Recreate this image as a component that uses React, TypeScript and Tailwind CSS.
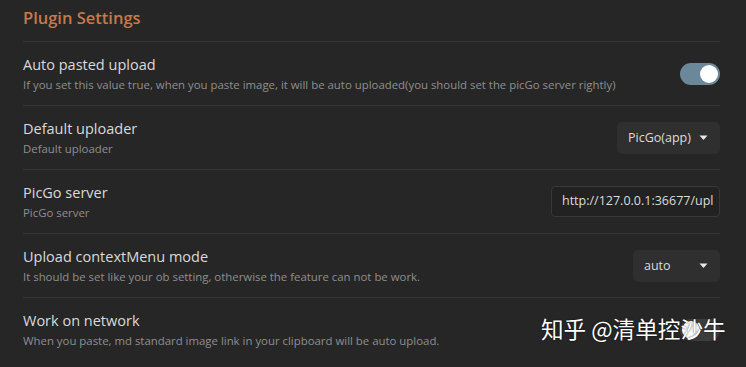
import React from "react";

const font = { fontFamily: '"Open Sans", "Noto Sans", sans-serif' };

function Row({ title, desc, children }: { title: string; desc: string; children: React.ReactNode }) {
  return (
    <div className="flex h-[64px] items-center justify-between border-t border-[#363636]">
      <div className="flex flex-col">
        <div className="text-[14.5px] leading-[19px] text-[#dadada]">{title}</div>
        <div className="mt-[3px] text-[11.4px] leading-[16px] text-[#8f8f8f]">{desc}</div>
      </div>
      <div className="flex items-center">{children}</div>
    </div>
  );
}

function Caret() {
  return (
    <svg width="9" height="6" viewBox="0 0 9 6" className="ml-auto">
      <path d="M0.5 0.5 L8.5 0.5 L4.5 5 Z" fill="#e8e8e8" />
    </svg>
  );
}

export default function App() {
  return (
    <div className="relative h-[367px] w-[746px] overflow-hidden bg-[#262626]" style={font}>
      <div className="pl-[23px] pr-[26px]">
        <div className="flex h-[41px] items-center">
          <div className="text-[16.5px] font-semibold text-[#c6794a] pb-[5px]">Plugin Settings</div>
        </div>
        <Row
          title="Auto pasted upload"
          desc="If you set this value true, when you paste image, it will be auto uploaded(you should set the picGo server rightly)"
        >
          <div className="flex h-[22px] w-[40px] items-center justify-end rounded-full bg-[#6a8899] pr-[2px]">
            <div className="h-[18px] w-[18px] rounded-full bg-white" />
          </div>
        </Row>
        <Row title="Default uploader" desc="Default uploader">
          <div className="flex h-[32px] w-[103px] items-center rounded-[5px] bg-[#2f2f2f] pl-[11px] pr-[12px] text-[12.5px] text-[#dcdcdc]">
            <span className="pt-[2px]">PicGo(app)</span>
            <Caret />
          </div>
        </Row>
        <Row title="PicGo server" desc="PicGo server">
          <div className="flex h-[31px] w-[169px] items-center overflow-hidden whitespace-nowrap rounded-[4px] border border-[#383838] bg-[#222222] pl-[10px] pr-[8px] text-[12.5px] text-[#dcdcdc]">
            <span>http://127.0.0.1:36677/upl</span>
          </div>
        </Row>
        <Row
          title="Upload contextMenu mode"
          desc="It should be set like your ob setting, otherwise the feature can not be work."
        >
          <div className="flex h-[32px] w-[87px] items-center rounded-[5px] bg-[#2f2f2f] pl-[11px] pr-[12px] text-[12.5px] text-[#dcdcdc]">
            <span className="pt-[2px]">auto</span>
            <Caret />
          </div>
        </Row>
        <Row
          title="Work on network"
          desc="When you paste, md standard image link in your clipboard will be auto upload."
        >
          <div className="flex h-[22px] w-[40px] items-center justify-start rounded-full bg-[#3c3c3c] pl-[2px]">
            <div className="h-[18px] w-[18px] rounded-full bg-white" />
          </div>
        </Row>
      </div>
      <div
        className="absolute left-[541px] top-[314px] whitespace-nowrap text-[22.6px] leading-[30px] text-white"
        style={{ fontFamily: '"Noto Sans CJK SC", sans-serif', textShadow: "0 0 2px rgba(0,0,0,0.8)" }}
      >
        知乎 @清单控沙牛
      </div>
    </div>
  );
}
